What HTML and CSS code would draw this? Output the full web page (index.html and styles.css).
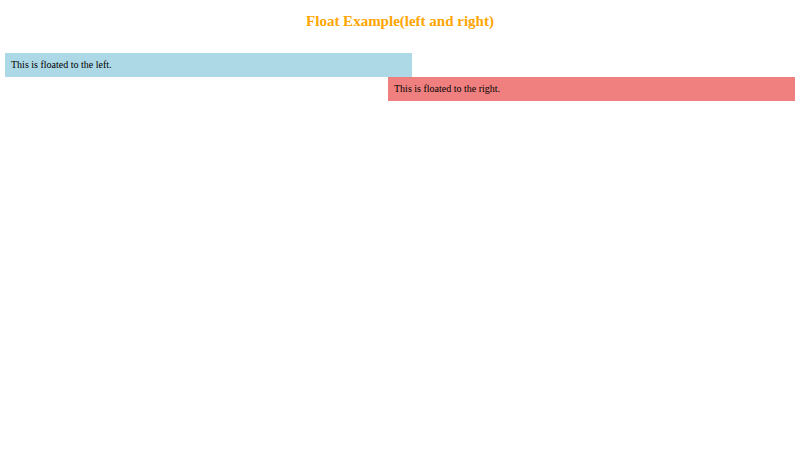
FILE: index.html
```html
<!DOCTYPE html>
<html lang="en">
<head>
    <meta charset="UTF-8">
    <meta name="viewport" content="width=device-width, initial-scale=1.0">
    <title>Float Example</title>
    <link rel="stylesheet" href="styles.css">
</head>
<body>
    <h1>Float Example(left and right)</h1>

    <div class="box left">This is floated to the left.</div>
    <div class="box right">This is floated to the right.</div>
</body>
</html>
```

FILE: styles.css
```css
body {
    font-family: "Liberation Serif", "Times New Roman", serif;
    margin: 5px;
}
h1 {
    text-align: center;
    color: orange;
    font-size: 15px;
    margin: 8px 0 23px;
}
.box {
    width: 50%;
    padding: 6px;
    font-size: 10px;
    line-height: 12px;
}
.left {
    float: left;
    background-color: lightblue;
}
.right {
    float: right;
    background-color: lightcoral;
}
```
